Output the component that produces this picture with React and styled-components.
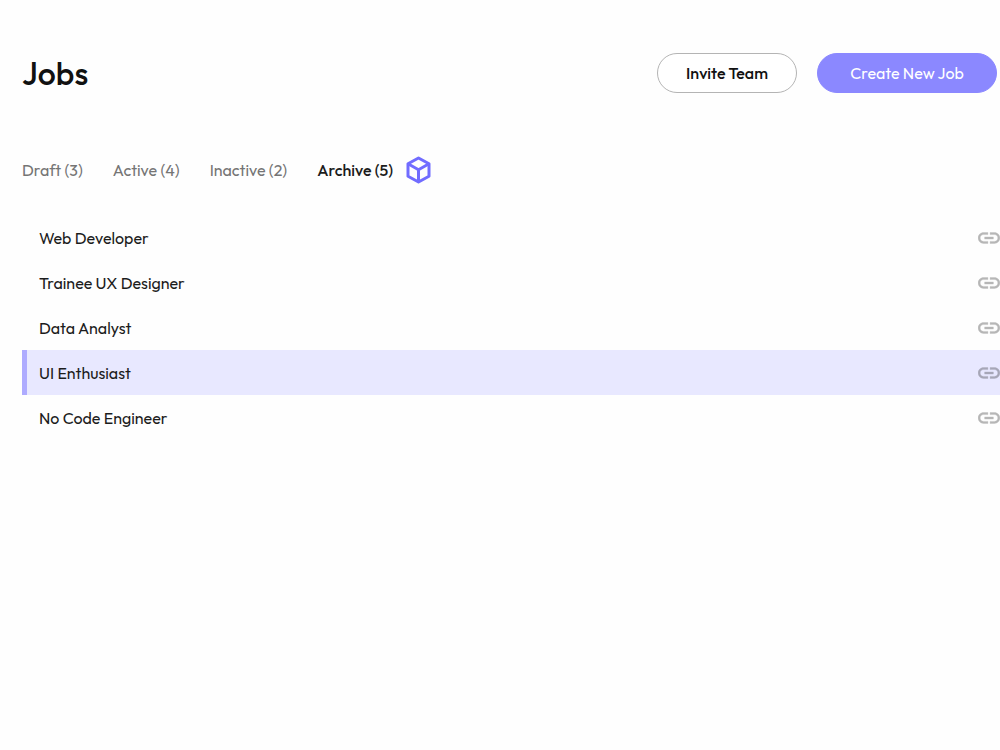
import React from "react";
import styled, { createGlobalStyle } from "styled-components";

const GlobalStyle = createGlobalStyle`
  * {
    box-sizing: border-box;
  }
  body {
    margin: 0;
    background: #fefefe;
    color: #1c1c1c;
    font-family: Outfit, Lato, sans-serif;
    font-size: 16px;
    line-height: 20px;
  }
`

/// Header

const Page = styled.main`
  padding: 53px 0 0 22px;
`
const Header = styled.header`
  display: flex;
  align-items: center;
  justify-content: space-between;
  padding-right: 3px;
`
const Title = styled.h1`
  margin: 0;
  color: #111;
  font-size: 32px;
  line-height: 40px;
  font-weight: 500;
`
const Actions = styled.div`
  display: flex;
  gap: 20px;
`
const Button = styled.button`
  width: ${({ $primary }) => ($primary ? "180px" : "140px")};
  height: 40px;
  padding: 0;
  border: 1px solid ${({ $primary }) => ($primary ? "#8b88ff" : "#b4b4b4")};
  border-radius: 20px;
  background: ${({ $primary }) => ($primary ? "#8b88ff" : "#fff")};
  color: ${({ $primary }) => ($primary ? "#fff" : "#111")};
  font: inherit;
  font-weight: ${({ $primary }) => ($primary ? 400 : 500)};
  cursor: pointer;
`

/// Tabs

const Tabs = styled.nav`
  display: flex;
  align-items: center;
  gap: 30px;
  height: 30px;
  margin-top: 62px;
`
const Tab = styled.button`
  display: flex;
  align-items: center;
  gap: 12px;
  padding: 0;
  border: 0;
  background: none;
  color: ${({ $active }) => ($active ? "#1c1c1c" : "#757575")};
  font: inherit;
  font-weight: ${({ $active }) => ($active ? 500 : 400)};
  white-space: nowrap;
  cursor: pointer;
`

/// List

const JobList = styled.ul`
  margin: 30px 0 0;
  padding: 0;
  list-style: none;
`
const JobRow = styled.li`
  display: flex;
  align-items: center;
  justify-content: space-between;
  height: 45px;
  padding-left: 12px;
  border-left: 5px solid ${({ $selected }) => ($selected ? "#aeabff" : "transparent")};
  background: ${({ $selected }) => ($selected ? "#e8e8ff" : "none")};
`
const CopyLink = styled.button`
  display: flex;
  padding: 0;
  border: 0;
  background: none;
  color: #000;
  opacity: 0.28;
  cursor: pointer;
`

const CubeIcon = () => (
  <svg width="26" height="28" viewBox="0 0 26 28" fill="none" stroke="#716cff" strokeWidth="3" strokeLinejoin="round" aria-hidden="true">
    <path d="M13.5 2 24 7.8V20.2L13.5 26 3 20.2V7.8Z" />
    <path d="M3 7.8 13.5 13.8 24 7.8M13.5 13.8V26" />
  </svg>
)

const LinkIcon = () => (
  <svg width="22" height="12" viewBox="2 6.5 20 11" fill="currentColor" stroke="currentColor" strokeWidth="0.3" aria-hidden="true">
    <path d="M3.9 12c0-1.71 1.39-3.1 3.1-3.1h4V7H7c-2.76 0-5 2.24-5 5s2.24 5 5 5h4v-1.9H7c-1.71 0-3.1-1.39-3.1-3.1zM8 13h8v-2H8v2zm9-6h-4v1.9h4c1.71 0 3.1 1.39 3.1 3.1s-1.39 3.1-3.1 3.1h-4V17h4c2.76 0 5-2.24 5-5s-2.24-5-5-5z" />
  </svg>
)

const tabs = [
  { name: "Draft", count: 3 },
  { name: "Active", count: 4 },
  { name: "Inactive", count: 2 },
  { name: "Archive", count: 5 },
]

const jobs = [
  "Web Developer",
  "Trainee UX Designer",
  "Data Analyst",
  "UI Enthusiast",
  "No Code Engineer",
]

export default function App() {
  const [active, setActive] = React.useState("Archive")
  const [selected, setSelected] = React.useState("UI Enthusiast")

  return (
    <Page>
      <GlobalStyle />
      <Header>
        <Title>Jobs</Title>
        <Actions>
          <Button>Invite Team</Button>
          <Button $primary>Create New Job</Button>
        </Actions>
      </Header>

      <Tabs>
        {tabs.map(({ name, count }) => (
          <Tab key={name} $active={name === active} onClick={() => setActive(name)}>
            {`${name} (${count})`}
            {name === active && <CubeIcon />}
          </Tab>
        ))}
      </Tabs>

      <JobList>
        {jobs.map((job) => (
          <JobRow key={job} $selected={job === selected} onClick={() => setSelected(job)}>
            <span>{job}</span>
            <CopyLink aria-label={`Copy link to ${job}`}>
              <LinkIcon />
            </CopyLink>
          </JobRow>
        ))}
      </JobList>
    </Page>
  )
}
